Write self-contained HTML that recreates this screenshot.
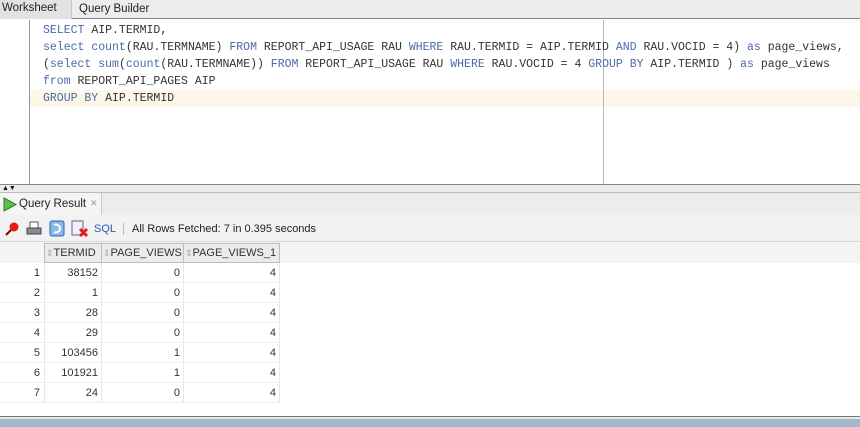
<!DOCTYPE html>
<html><head><style>
*{margin:0;padding:0;box-sizing:border-box}
body{width:860px;height:427px;overflow:hidden;background:#fff;font-family:"Liberation Sans",sans-serif;position:relative}
.a{position:absolute}
.code{font-family:"Liberation Mono",monospace;font-size:11.5px;color:#333;white-space:pre;line-height:17px}
.k{color:#4a6aa8}
.ui{font-size:11px;color:#222}
.grid{font-family:"Liberation Sans",sans-serif;font-size:11px;color:#333}
</style></head><body>
<div class="a" style="left:0;top:0;width:860px;height:19px;background:#ececec;border-bottom:1px solid #8a8a8a"></div>
<div class="a" style="left:0;top:0;width:72px;height:19px;background:#e2e2e2;border-right:1px solid #c8c8c8"></div>
<div class="a ui" style="left:2px;top:2px;font-size:11.5px">Worksheet</div>
<div class="a ui" style="left:79px;top:3px;font-size:11.5px">Query Builder</div>
<div class="a" style="left:0;top:20px;width:860px;height:164px;background:#fff"></div>
<div class="a" style="left:29px;top:20px;width:1px;height:164px;background:#999"></div>
<div class="a" style="left:30px;top:90px;width:830px;height:17px;background:#fdf7e8"></div>
<div class="a" style="left:603px;top:20px;width:1px;height:164px;background:#b8b8b8"></div>
<div class="a code" style="left:43px;top:22px"><span class="k">SELECT</span> AIP.TERMID,
<span class="k">select</span> <span class="k">count</span>(RAU.TERMNAME) <span class="k">FROM</span> REPORT_API_USAGE RAU <span class="k">WHERE</span> RAU.TERMID = AIP.TERMID <span class="k">AND</span> RAU.VOCID = 4) <span class="k">as</span> page_views,
(<span class="k">select</span> <span class="k">sum</span>(<span class="k">count</span>(RAU.TERMNAME)) <span class="k">FROM</span> REPORT_API_USAGE RAU <span class="k">WHERE</span> RAU.VOCID = 4 <span class="k">GROUP BY</span> AIP.TERMID ) <span class="k">as</span> page_views
<span class="k">from</span> REPORT_API_PAGES AIP
<span class="k">GROUP BY</span> AIP.TERMID</div>
<div class="a" style="left:0;top:184px;width:860px;height:9px;background:#ececec;border-top:1px solid #888;border-bottom:1px solid #bbb"></div>
<div class="a" style="left:2px;top:185px;font-size:7px;color:#111;line-height:7px">▲▼</div>
<div class="a" style="left:0;top:193px;width:860px;height:22px;background:#ececec"></div>
<div class="a" style="left:0;top:193px;width:102px;height:22px;background:#f4f4f4;border-right:1px solid #c8c8c8"></div>
<svg class="a" style="left:2px;top:197px" width="16" height="15"><polygon points="2,1 14,7.5 2,14" fill="#5cc04a" stroke="#2d7a20" stroke-width="1"/></svg>
<div class="a ui" style="left:19px;top:198px;font-size:11.5px">Query Result</div>
<div class="a" style="left:90px;top:198px;font-size:9px;color:#999">✕</div>
<div class="a" style="left:0;top:215px;width:860px;height:27px;background:#f2f2f2;border-bottom:1px solid #d8d8d8"></div>
<svg class="a" style="left:4px;top:221px" width="16" height="16"><line x1="2" y1="14" x2="7" y2="9" stroke="#800" stroke-width="2"/><circle cx="10" cy="6" r="4.5" fill="#d21"/></svg>
<svg class="a" style="left:26px;top:221px" width="16" height="16"><rect x="4" y="1" width="8" height="6" fill="#fff" stroke="#555"/><rect x="1" y="7" width="14" height="6" fill="#889" stroke="#444"/></svg>
<svg class="a" style="left:49px;top:220px" width="16" height="17"><rect x="1" y="1" width="14" height="15" rx="2" fill="#8ab8e8" stroke="#2a64b0"/><path d="M5 5 a4 4 0 1 1 0 7" fill="none" stroke="#fff" stroke-width="2"/></svg>
<svg class="a" style="left:71px;top:220px" width="18" height="17"><rect x="1" y="1" width="11" height="14" fill="#eef" stroke="#667"/><path d="M9 9 L16 16 M16 9 L9 16" stroke="#d22" stroke-width="3"/></svg>
<div class="a ui" style="left:94px;top:223px;color:#2a5ab0">SQL</div>
<div class="a" style="left:123px;top:223px;width:1px;height:12px;background:#bbb"></div>
<div class="a ui" style="left:132px;top:223px">All Rows Fetched: 7 in 0.395 seconds</div>
<div class="a" style="left:0;top:242px;width:860px;height:21px;background:#f4f4f4"></div>
<div class="a" style="left:44px;top:243px;width:236px;height:20px;background:#ebebeb;border:1px solid #bcbcbc"></div>
<div class="a" style="left:101px;top:243px;width:1px;height:20px;background:#bcbcbc"></div>
<div class="a" style="left:183px;top:243px;width:1px;height:20px;background:#bcbcbc"></div>
<div class="a grid" style="left:46px;top:247px"><span style="color:#aaa;font-size:9px">⇕</span>TERMID</div>
<div class="a grid" style="left:103px;top:247px"><span style="color:#aaa;font-size:9px">⇕</span>PAGE_VIEWS</div>
<div class="a grid" style="left:185px;top:247px"><span style="color:#aaa;font-size:9px">⇕</span>PAGE_VIEWS_1</div>
<div class="a" style="left:44px;top:263px;width:1px;height:140px;background:#e6e6e6"></div>
<div class="a" style="left:101px;top:263px;width:1px;height:140px;background:#e6e6e6"></div>
<div class="a" style="left:183px;top:263px;width:1px;height:140px;background:#e6e6e6"></div>
<div class="a" style="left:279px;top:263px;width:1px;height:140px;background:#e6e6e6"></div>
<div class="a grid" style="left:0;top:263px;width:280px;line-height:20px">
<div style="display:flex;border-bottom:1px solid #eee;height:20px"><span style="width:40px;text-align:right">1</span><span style="width:58px;text-align:right">38152</span><span style="width:82px;text-align:right">0</span><span style="width:96px;text-align:right">4</span></div>
<div style="display:flex;border-bottom:1px solid #eee;height:20px"><span style="width:40px;text-align:right">2</span><span style="width:58px;text-align:right">1</span><span style="width:82px;text-align:right">0</span><span style="width:96px;text-align:right">4</span></div>
<div style="display:flex;border-bottom:1px solid #eee;height:20px"><span style="width:40px;text-align:right">3</span><span style="width:58px;text-align:right">28</span><span style="width:82px;text-align:right">0</span><span style="width:96px;text-align:right">4</span></div>
<div style="display:flex;border-bottom:1px solid #eee;height:20px"><span style="width:40px;text-align:right">4</span><span style="width:58px;text-align:right">29</span><span style="width:82px;text-align:right">0</span><span style="width:96px;text-align:right">4</span></div>
<div style="display:flex;border-bottom:1px solid #eee;height:20px"><span style="width:40px;text-align:right">5</span><span style="width:58px;text-align:right">103456</span><span style="width:82px;text-align:right">1</span><span style="width:96px;text-align:right">4</span></div>
<div style="display:flex;border-bottom:1px solid #eee;height:20px"><span style="width:40px;text-align:right">6</span><span style="width:58px;text-align:right">101921</span><span style="width:82px;text-align:right">1</span><span style="width:96px;text-align:right">4</span></div>
<div style="display:flex;border-bottom:1px solid #eee;height:20px"><span style="width:40px;text-align:right">7</span><span style="width:58px;text-align:right">24</span><span style="width:82px;text-align:right">0</span><span style="width:96px;text-align:right">4</span></div>
</div>
<div class="a" style="left:0;top:416px;width:860px;height:3px;background:#e8e8e8;border-top:1px solid #777"></div>
<div class="a" style="left:0;top:419px;width:860px;height:8px;background:#a3b8cc"></div>
</body></html>
